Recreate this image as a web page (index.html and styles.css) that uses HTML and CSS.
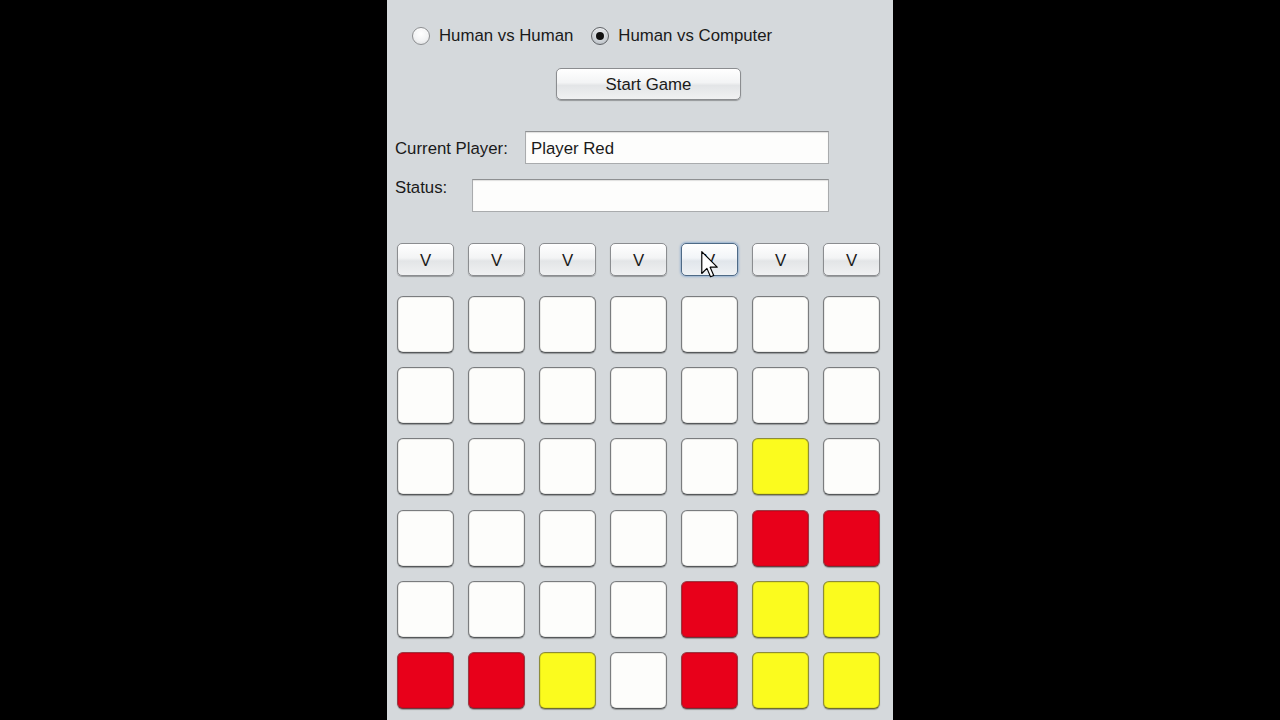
FILE: index.html
```html
<!DOCTYPE html>
<html>
<head>
<meta charset="utf-8">
<link rel="stylesheet" href="styles.css">
</head>
<body>
<div class="panel">
  <div class="modes">
    <label class="mode"><span class="radio"></span><span>Human vs Human</span></label>
    <label class="mode"><span class="radio checked"></span><span>Human vs Computer</span></label>
  </div>
  <div class="start-row"><button class="btn start">Start Game</button></div>
  <div class="info-row player-row">
    <span class="label">Current Player:</span>
    <div class="field">Player Red</div>
  </div>
  <div class="info-row status-row">
    <span class="label">Status:</span>
    <div class="field"></div>
  </div>
  <div class="drops">
    <button class="btn drop">V</button>
    <button class="btn drop">V</button>
    <button class="btn drop">V</button>
    <button class="btn drop">V</button>
    <button class="btn drop hover"><span class="vtext">V</span>
      <svg class="cursor" viewBox="0 0 13 21" width="17" height="27"><path d="M0.5 0.5 L0.5 17.5 L4.5 13.5 L7.3 20 L9.8 19 L7 12.6 L12.5 12.6 Z" fill="#fff" stroke="#000" stroke-width="0.9" stroke-linejoin="round"/></svg>
    </button>
    <button class="btn drop">V</button>
    <button class="btn drop">V</button>
  </div>
  <div class="board">
    <div class="cell"></div><div class="cell"></div><div class="cell"></div><div class="cell"></div><div class="cell"></div><div class="cell"></div><div class="cell"></div>
    <div class="cell"></div><div class="cell"></div><div class="cell"></div><div class="cell"></div><div class="cell"></div><div class="cell"></div><div class="cell"></div>
    <div class="cell"></div><div class="cell"></div><div class="cell"></div><div class="cell"></div><div class="cell"></div><div class="cell yellow"></div><div class="cell"></div>
    <div class="cell"></div><div class="cell"></div><div class="cell"></div><div class="cell"></div><div class="cell"></div><div class="cell red"></div><div class="cell red"></div>
    <div class="cell"></div><div class="cell"></div><div class="cell"></div><div class="cell"></div><div class="cell red"></div><div class="cell yellow"></div><div class="cell yellow"></div>
    <div class="cell red"></div><div class="cell red"></div><div class="cell yellow"></div><div class="cell"></div><div class="cell red"></div><div class="cell yellow"></div><div class="cell yellow"></div>
  </div>
</div>
</body>
</html>
```

FILE: styles.css
```css
html, body {
  margin: 0;
  padding: 0;
  background: #000;
  height: 720px;
  overflow: hidden;
}
body {
  font-family: "Liberation Sans", Arial, sans-serif;
  font-size: 16.8px;
  color: #1a1a1a;
}
.panel {
  width: 506px;
  height: 720px;
  margin: 0 auto;
  background: #d5d9dc;
  box-sizing: border-box;
  display: flex;
  flex-direction: column;
}
.modes {
  display: flex;
  align-items: center;
  height: 20px;
  margin-top: 26px;
  padding-left: 25px;
  gap: 18px;
}
.mode {
  display: flex;
  align-items: center;
  gap: 9px;
  line-height: 20px;
}
.radio {
  width: 16px;
  height: 16px;
  border-radius: 50%;
  border: 1px solid #8d8f91;
  background: radial-gradient(circle at 50% 35%, #ffffff 0%, #f2f3f4 55%, #d7d9db 100%);
  box-shadow: inset 0 1px 1px rgba(255,255,255,0.8);
  position: relative;
}
.radio.checked {
  border-color: #5f6266;
  background: radial-gradient(circle at 50% 40%, #f4f6f8 0%, #c9ced3 60%, #a9afb5 100%);
}
.radio.checked::after {
  content: "";
  position: absolute;
  left: 4px;
  top: 4px;
  width: 8px;
  height: 8px;
  border-radius: 50%;
  background: #111;
}
.start-row {
  margin-top: 22px;
  padding-left: 169px;
}
.btn {
  font-family: "Liberation Sans", Arial, sans-serif;
  font-size: 16.8px;
  color: #1a1a1a;
  border: 1px solid #8b8d90;
  border-radius: 5px;
  background: linear-gradient(to bottom, #ffffff 0%, #f3f4f5 45%, #e3e5e7 55%, #f0f1f2 100%);
  box-shadow: 0 1px 1px rgba(0,0,0,0.3), inset 0 1px 0 #fff;
  padding: 2px 0 0 0;
  box-sizing: border-box;
}
.start {
  width: 185px;
  height: 32px;
}
.info-row {
  display: flex;
  padding-left: 8px;
}
.player-row {
  margin-top: 31px;
  align-items: flex-start;
}
.player-row .label {
  width: 130px;
  padding-top: 8px;
  line-height: 20px;
}
.status-row {
  margin-top: 15px;
  align-items: flex-start;
}
.status-row .label {
  width: 77px;
  line-height: 18px;
}
.label {
  white-space: nowrap;
}
.field {
  height: 33px;
  box-sizing: border-box;
  border: 1px solid #a9abad;
  border-top-color: #8e9092;
  background: #fdfdfc;
  box-shadow: inset 0 1px 1px rgba(0,0,0,0.12);
  padding-left: 5px;
  padding-top: 3px;
  line-height: 28px;
}
.player-row .field {
  width: 304px;
}
.status-row .field {
  width: 357px;
}
.drops {
  margin-top: 31px;
  padding-left: 10px;
  display: flex;
  gap: 14px;
}
.drop {
  width: 57px;
  height: 33px;
  position: relative;
}
.drop.hover {
  border-color: #4e6a86;
  box-shadow: 0 0 2px 1px rgba(110,150,200,0.6), inset 0 0 1px #fff;
  background: linear-gradient(to bottom, #ffffff 0%, #f2f5f8 45%, #e1e6eb 55%, #eef1f4 100%);
}
.cursor {
  position: absolute;
  left: 19px;
  top: 7px;
}
.board {
  margin-top: 20px;
  padding-left: 10px;
  display: grid;
  grid-template-columns: repeat(7, 57px);
  grid-auto-rows: 57px;
  column-gap: 14px;
  row-gap: 14.2px;
}
.cell {
  box-sizing: border-box;
  border: 1px solid #7a7c7e;
  border-bottom-color: #55585a;
  border-radius: 6px;
  background: #fdfdfb;
  box-shadow: 0 1px 1px rgba(0,0,0,0.3), inset 0 0 0 0.5px rgba(0,0,0,0.15);
}
.cell.red {
  background: #e8001a;
  border-color: #9a3a44;
  border-bottom-color: #6e3a40;
}
.cell.yellow {
  background: #fbfb1e;
  border-color: #8d8c3a;
  border-bottom-color: #6e6d30;
}
```
